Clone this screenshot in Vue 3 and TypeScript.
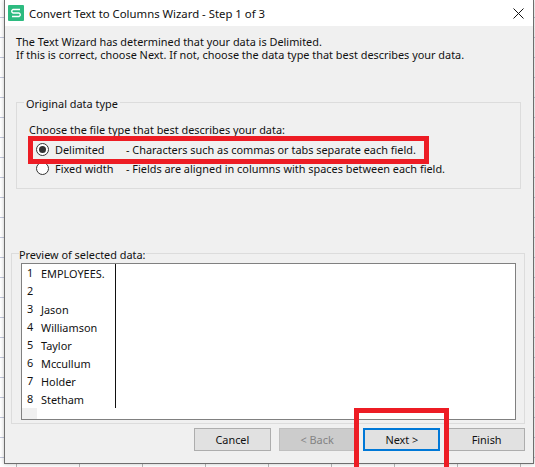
<script setup lang="ts">
const rows: { n: number; text: string }[] = [
  { n: 1, text: 'EMPLOYEES.' },
  { n: 2, text: '' },
  { n: 3, text: 'Jason' },
  { n: 4, text: 'Williamson' },
  { n: 5, text: 'Taylor' },
  { n: 6, text: 'Mccullum' },
  { n: 7, text: 'Holder' },
  { n: 8, text: 'Stetham' },
]
const types = [
  { label: 'Delimited', desc: '- Characters such as commas or tabs separate each field.', on: true },
  { label: 'Fixed width', desc: '- Fields are aligned in columns with spaces between each field.', on: false },
]
</script>

<template>
  <div class="screen">
    <div class="window">
      <header class="titlebar">
        <svg class="logo" width="16" height="16" viewBox="0 0 16 16">
          <rect width="16" height="16" rx="1" fill="#2dbb80" />
          <path d="M12 4.5H5L3.8 5.6V7L5 8H11L12.2 9V10.4L11 11.5H4" fill="none" stroke="#fff" stroke-width="1.3" />
        </svg>
        <span class="title">Convert Text to Columns Wizard - Step 1 of 3</span>
        <svg class="close" width="11" height="11" viewBox="0 0 11 11">
          <path d="M.5.5l10 10M10.5.5l-10 10" stroke="#111" stroke-width="1" fill="none" />
        </svg>
      </header>

      <div class="body">
        <p class="intro">The Text Wizard has determined that your data is Delimited.<br />If this is correct, choose Next. If not, choose the data type that best describes your data.</p>

        <section class="group type-group">
          <span class="legend">Original data type</span>
          <p class="prompt">Choose the file type that best describes your data:</p>
          <div v-for="t in types" :key="t.label" class="radio-row">
            <span class="radio" :class="{ on: t.on }"></span>
            <span class="radio-label">{{ t.label }}</span>
            <span>{{ t.desc }}</span>
          </div>
        </section>

        <section class="group preview-group">
          <span class="legend preview-legend">Preview of selected data:</span>
          <div class="preview">
            <div class="nums">
              <div v-for="r in rows" :key="r.n" class="num">{{ r.n }}</div>
            </div>
            <div class="column">
              <div v-for="r in rows" :key="r.n" class="cell">{{ r.text }}</div>
            </div>
          </div>
        </section>

        <footer class="buttons">
          <button class="btn">Cancel</button>
          <button class="btn disabled">&lt; Back</button>
          <button class="btn primary">Next &gt;</button>
          <button class="btn">Finish</button>
        </footer>
      </div>
    </div>
    <div class="mark mark-radio"></div>
    <div class="mark mark-next"></div>
  </div>
</template>

<style>
html, body { margin: 0; padding: 0; overflow: hidden; }
</style>

<style scoped>
.screen {
  position: relative;
  width: 535px;
  height: 467px;
  overflow: hidden;
  box-sizing: border-box;
  padding-left: 4px;
  background-color: #fff;
  background-image:
    repeating-linear-gradient(to bottom, transparent 0 17px, #c3c8dc 17px 18px, transparent 18px 20px),
    repeating-linear-gradient(to right, transparent 0 16px, #b9b9b9 16px 17px, transparent 17px 63px);
  font-family: "Noto Sans", sans-serif;
  font-size: 10.9px;
  color: #111;
}
.window {
  width: 530px;
  height: 464px;
  box-sizing: border-box;
  border: 1px solid #6e6e6e;
  border-top: 0;
  background: #f0f0f0;
  box-shadow: 0 0 4px rgba(0, 0, 0, .25);
  display: flex;
  flex-direction: column;
}
.titlebar {
  height: 26px;
  flex: none;
  background: #fff;
  display: flex;
  align-items: center;
  padding: 0 9px 0 3px;
}
.logo { flex: none; }
.title { margin-left: 5px; font-size: 11.35px; flex: 1; }
.close { flex: none; }
.body {
  flex: 1;
  position: relative;
  display: flex;
  flex-direction: column;
  padding: 9px 8px 0 6px;
  min-height: 0;
}
p { margin: 0; }
.intro { margin-left: 5px; line-height: 13px; }
.group {
  position: relative;
  border: 1px solid #dcdcdc;
  box-sizing: border-box;
}
.legend {
  position: absolute;
  top: -7px;
  left: 7px;
  padding: 0 2px;
  background: #f0f0f0;
  line-height: 15px;
}
.type-group {
  margin: 41px 4px 0 5px;
  height: 87px;
  padding: 19px 0 0 12px;
}
.prompt { line-height: 15px; }
.radio-row {
  display: flex;
  align-items: center;
  height: 19px;
  margin-left: 7px;
}
.prompt + .radio-row { margin-top: 3px; }
.radio {
  width: 11px;
  height: 11px;
  flex: none;
  border: 1px solid #333;
  border-radius: 50%;
  background: #fff;
  position: relative;
}
.radio.on::after {
  content: "";
  position: absolute;
  inset: 2px;
  border-radius: 50%;
  background: #333;
}
.radio-label { margin-left: 6px; width: 71px; flex: none; }
.preview-group {
  margin: 64px 0 0 0;
  height: 171px;
  padding: 9px 8px 3px 9px;
}
.preview-legend { left: 7px; padding: 0; }
.preview {
  height: 157px;
  box-sizing: border-box;
  border: 1px solid #808080;
  background: #fff;
  display: flex;
  align-items: flex-start;
}
.nums {
  width: 15px;
  height: 100%;
  flex: none;
  background: #f0f0f0;
  margin-right: 1px;
}
.num {
  height: 18px;
  line-height: 18px;
  padding-left: 1px;
  text-align: center;
  background: #fff;
}
.column {
  width: 74px;
  padding-left: 3px;
  border-right: 1px solid #111;
}
.cell { height: 18px; line-height: 19px; white-space: nowrap; }
.buttons {
  display: flex;
  margin-top: 4px;
  margin-left: 183px;
  gap: 8px;
}
.btn {
  width: 78px;
  height: 23px;
  box-sizing: border-box;
  padding: 0;
  border: 1px solid #adadad;
  background: #e1e1e1;
  font: inherit;
  color: #111;
}
.btn.disabled { background: #ccc; border-color: #bfbfbf; color: #838383; }
.btn.primary { border: 2px solid #0078d7; }
.mark {
  position: absolute;
  box-sizing: border-box;
  border: 5px solid #ed1c24;
}
.mark-radio { left: 28px; top: 136px; width: 401px; height: 28px; }
.mark-next { left: 354px; top: 408px; width: 95px; height: 70px; }
</style>
